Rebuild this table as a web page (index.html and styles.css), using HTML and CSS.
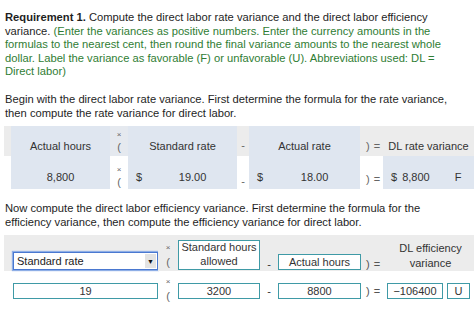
FILE: index.html
```html
<!DOCTYPE html>
<html>
<head>
<meta charset="utf-8">
<link rel="stylesheet" href="styles.css">
</head>
<body>
<div class="page">
  <p class="para first"><b>Requirement 1.</b> Compute the direct labor rate variance and the direct labor efficiency variance. <span class="green">(Enter the variances as positive numbers. Enter the currency amounts in the formulas to the nearest cent, then round the final variance amounts to the nearest whole dollar. Label the variance as favorable (F) or unfavorable (U). Abbreviations used: DL = Direct labor)</span></p>
  <p class="para">Begin with the direct labor rate variance. First determine the formula for the rate variance, then compute the rate variance for direct labor.</p>

  <div class="t1">
    <div class="c hd"></div>
    <div class="c hd blue ctr">Actual hours</div>
    <div class="c hd op opx"><span class="x">×</span><span>(</span></div>
    <div class="c hd blue ctr">Standard rate</div>
    <div class="c hd op"><span class="minus">-</span></div>
    <div class="c hd blue ctr">Actual rate</div>
    <div class="c hd op eq"><span>)</span><span>=</span></div>
    <div class="c hd ctr res">DL rate variance</div>

    <div class="c dr"></div>
    <div class="c dr blue ctr">8,800</div>
    <div class="c dr op"><span class="x">×</span><span>(</span></div>
    <div class="c dr blue money"><span class="dol">$</span><span class="num">19.00</span></div>
    <div class="c dr op"><span class="minus">-</span></div>
    <div class="c dr blue money"><span class="dol">$</span><span class="num">18.00</span></div>
    <div class="c dr op eq"><span>)</span><span>=</span></div>
    <div class="c dr blue var"><span class="dol">$</span><span class="amt">8,800</span><span class="fu">F</span></div>
  </div>

  <p class="para p3">Now compute the direct labor efficiency variance. First determine the formula for the efficiency variance, then compute the efficiency variance for direct labor.</p>

  <div class="t2">
    <div class="d hd"></div>
    <div class="d hd bot"><div class="sel"><span class="sel-txt">Standard rate</span><span class="sel-btn">▼</span></div></div>
    <div class="d hd op2"><span class="x">×</span><span class="par">(</span></div>
    <div class="d hd bot"><div class="box two">Standard hours<br>allowed</div></div>
    <div class="d hd bot mid"><span class="minus">-</span></div>
    <div class="d hd bot"><div class="box">Actual hours</div></div>
    <div class="d hd bot mid eq2"><span>)</span><span>=</span></div>
    <div class="d hd res2">DL efficiency<br>variance</div>

    <div class="d"></div>
    <div class="d cen"><div class="box">19</div></div>
    <div class="d op2"><span class="x">×</span><span class="par">(</span></div>
    <div class="d cen"><div class="box">3200</div></div>
    <div class="d cen mid"><span class="minus">-</span></div>
    <div class="d cen"><div class="box">8800</div></div>
    <div class="d cen mid eq2"><span>)</span><span>=</span></div>
    <div class="d cen pair"><div class="box neg">−106400</div><div class="box u">U</div></div>
  </div>
</div>
</body>
</html>
```
FILE: styles.css
```css
html, body {
  margin: 0;
  padding: 0;
  background: #ffffff;
}
body {
  font-family: "Liberation Sans", Arial, sans-serif;
  color: #1e1e1e;
}
.page {
  padding: 11px 0 0 4px;
  width: 470px;
}
.para {
  margin: 0 0 0 1px;
  width: 449px;
  font-size: 11.2px;
  line-height: 13.6px;
}
.para.first {
  margin-bottom: 14px;
}
.green {
  color: #2f7d34;
}
.t1 {
  margin-top: 6px;
  display: grid;
  grid-template-columns: 7px 99px 18px 109px 12px 111px 23px 1fr;
  grid-template-rows: 30px 33px;
  font-size: 11px;
  color: #333;
}
.c {
  display: flex;
  align-items: center;
}
.c.hd {
  background: #ececec;
  padding-top: 10px;
}
.c.dr {
  padding-top: 8px;
}
.c.blue {
  background: #dfe6f0;
}
.ctr {
  justify-content: center;
}
.op {
  flex-direction: column;
  justify-content: center;
  align-items: center;
  color: #666;
  font-size: 11px;
  line-height: 12px;
}
.c.hd.op {
  padding-top: 0;
}
.c.hd.opx {
  background: #e5e9ef;
}
.op .x {
  font-size: 8px;
  line-height: 9px;
  margin-bottom: 2px;
}
.op .minus {
  padding-top: 8px;
}
.op.eq {
  flex-direction: row;
  gap: 4px;
  justify-content: flex-start;
  padding-left: 6px;
  padding-top: 6px;
}
.c.hd.op.eq {
  padding-top: 10px;
}
.c.dr.op.eq {
  padding-top: 12px;
}
.res {
  white-space: nowrap;
}
.money {
  padding-left: 8px;
}
.money .num {
  flex: 1;
  text-align: center;
  padding-left: 6px;
}
.var {
  padding-left: 8px;
}
.var .amt {
  margin-left: 5px;
}
.var .fu {
  margin-left: 25px;
}
.p3 {
  margin-top: 13px;
}
.t2 {
  margin-top: 6px;
  display: grid;
  grid-template-columns: 9px 145px 20px 82px 18px 83px 26px 1fr;
  grid-template-rows: 36px 34px;
  font-size: 11px;
  color: #333;
}
.d {
  display: flex;
}
.d.hd {
  background: #ececec;
}
.bot {
  align-items: flex-end;
  padding-bottom: 1px;
}
.cen {
  align-items: center;
  padding-top: 5px;
}
.mid {
  justify-content: center;
}
.sel {
  box-sizing: border-box;
  width: 145px;
  height: 18px;
  border: 1px solid #4a78d0;
  box-shadow: 0 0 1px 1px #8eaee6;
  background: #fff;
  display: flex;
  align-items: center;
  font-size: 11px;
  color: #222;
}
.sel-txt {
  flex: 1;
  padding-left: 3px;
}
.sel-btn {
  width: 11px;
  height: 14px;
  margin-right: 1px;
  background: #e3e3e3;
  font-size: 7px;
  color: #111;
  display: flex;
  align-items: center;
  justify-content: center;
}
.op2 {
  flex-direction: column;
  align-items: center;
  justify-content: flex-end;
  color: #666;
  padding-bottom: 3px;
}
.op2 .x {
  font-size: 8px;
  line-height: 9px;
  margin-bottom: 4px;
}
.op2 .par {
  font-size: 11px;
  line-height: 12px;
}
.box {
  box-sizing: border-box;
  width: 100%;
  height: 16px;
  border: 1px solid #3f9aa6;
  background: #fff;
  text-align: center;
  font-size: 11px;
  line-height: 14px;
  color: #333;
}
.box.two {
  height: 30px;
  line-height: 13.5px;
}
.eq2 {
  gap: 4px;
  justify-content: flex-start;
  padding-left: 5px;
  color: #555;
}
.res2 {
  flex-direction: column;
  justify-content: center;
  text-align: center;
  align-items: center;
  line-height: 15px;
  padding-top: 5px;
}
.pair {
  gap: 4px;
}
.pair .box.neg {
  width: 56px;
}
.pair .box.u {
  width: 23px;
}
```
